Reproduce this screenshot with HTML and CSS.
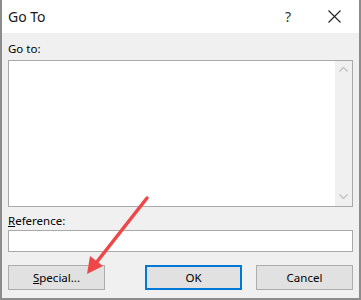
FILE: index.html
```html
<!DOCTYPE html>
<html lang="en">
<head>
    <meta charset="UTF-8">
    <meta name="viewport" content="width=device-width, initial-scale=1.0">
    <title>Go To</title>
    <link rel="stylesheet" href="styles.css">
</head>
<body>
    <div class="window">
        <div class="titlebar">
            <span class="title">Go To</span>
            <span class="help">?</span>
            <span class="close">
                <svg width="13" height="13" viewBox="0 0 13 13">
                    <path d="M0.5 0.5 L12.5 12.5 M12.5 0.5 L0.5 12.5" stroke="#222" stroke-width="1.1" fill="none"/>
                </svg>
            </span>
        </div>

        <div class="content">
            <div class="label">Go to:</div>
            <div class="listbox">
                <div class="list-items"></div>
                <div class="scrollbar">
                    <svg width="9" height="5" viewBox="0 0 9 5">
                        <path d="M0.5 4.5 L4.5 0.5 L8.5 4.5" stroke="#bfbfbf" stroke-width="1.2" fill="none"/>
                    </svg>
                    <svg width="9" height="5" viewBox="0 0 9 5">
                        <path d="M0.5 0.5 L4.5 4.5 L8.5 0.5" stroke="#bfbfbf" stroke-width="1.2" fill="none"/>
                    </svg>
                </div>
            </div>

            <div class="label label-ref"><u>R</u>eference:</div>
            <input class="textbox" type="text">

            <div class="buttons">
                <button class="button"><u>S</u>pecial...</button>
                <div class="right-buttons">
                    <button class="button default">OK</button>
                    <button class="button">Cancel</button>
                </div>
            </div>
        </div>

        <svg class="arrow" width="361" height="300" viewBox="0 0 361 300">
            <line x1="147" y1="198" x2="96" y2="263" stroke="#ee4747" stroke-width="3.5" stroke-linecap="round"/>
            <polygon points="87,274 90,256 103,266" fill="#ee4747"/>
        </svg>
    </div>
</body>
</html>
```

FILE: styles.css
```css
body {
    margin: 0;
    font-family: "Noto Sans", "Open Sans", sans-serif;
    font-size: 12px;
    color: #000;
}
.window {
    position: relative;
    width: 361px;
    height: 300px;
    box-sizing: border-box;
    border: 2px solid #8c8c8c;
    border-top: none;
    background-color: #f0f0f0;
}
.titlebar {
    height: 33px;
    background: #ffffff;
    display: flex;
    align-items: center;
}
.title {
    flex: 1;
    padding-left: 6px;
    font-size: 14px;
    color: #1a1a1a;
}
.help {
    font-size: 14px;
    color: #333;
    margin-right: 37px;
}
.close {
    display: flex;
    margin-right: 18px;
}
.content {
    padding: 0 6px;
}
.label {
    margin-top: 8px;
    height: 16px;
    line-height: 16px;
    font-size: 11.5px;
}
.listbox {
    margin-top: 3px;
    height: 147px;
    box-sizing: border-box;
    border: 1px solid #a9a9a9;
    background: #ffffff;
    display: flex;
}
.list-items {
    flex: 1;
}
.scrollbar {
    width: 17px;
    background: #f0f0f0;
    display: flex;
    flex-direction: column;
    justify-content: space-between;
    align-items: center;
    padding: 6px 0 7px;
}
.label-ref {
    margin-top: 6px;
}
.textbox {
    display: block;
    margin: 1px 0 0;
    width: 100%;
    height: 22px;
    box-sizing: border-box;
    border: 1px solid #a9a9a9;
    background: #ffffff;
    padding: 0;
    outline: none;
}
.buttons {
    margin-top: 13px;
    display: flex;
    justify-content: space-between;
}
.right-buttons {
    display: flex;
    gap: 14px;
}
.button {
    width: 97px;
    height: 25px;
    box-sizing: border-box;
    border: 1px solid #adadad;
    background-color: #e1e1e1;
    font-family: "Noto Sans", "Open Sans", sans-serif;
    font-size: 11.5px;
    color: #000;
    padding: 0;
}
.default {
    border: 2px solid #0078d7;
}
.arrow {
    position: absolute;
    left: -2px;
    top: 0;
}
```
